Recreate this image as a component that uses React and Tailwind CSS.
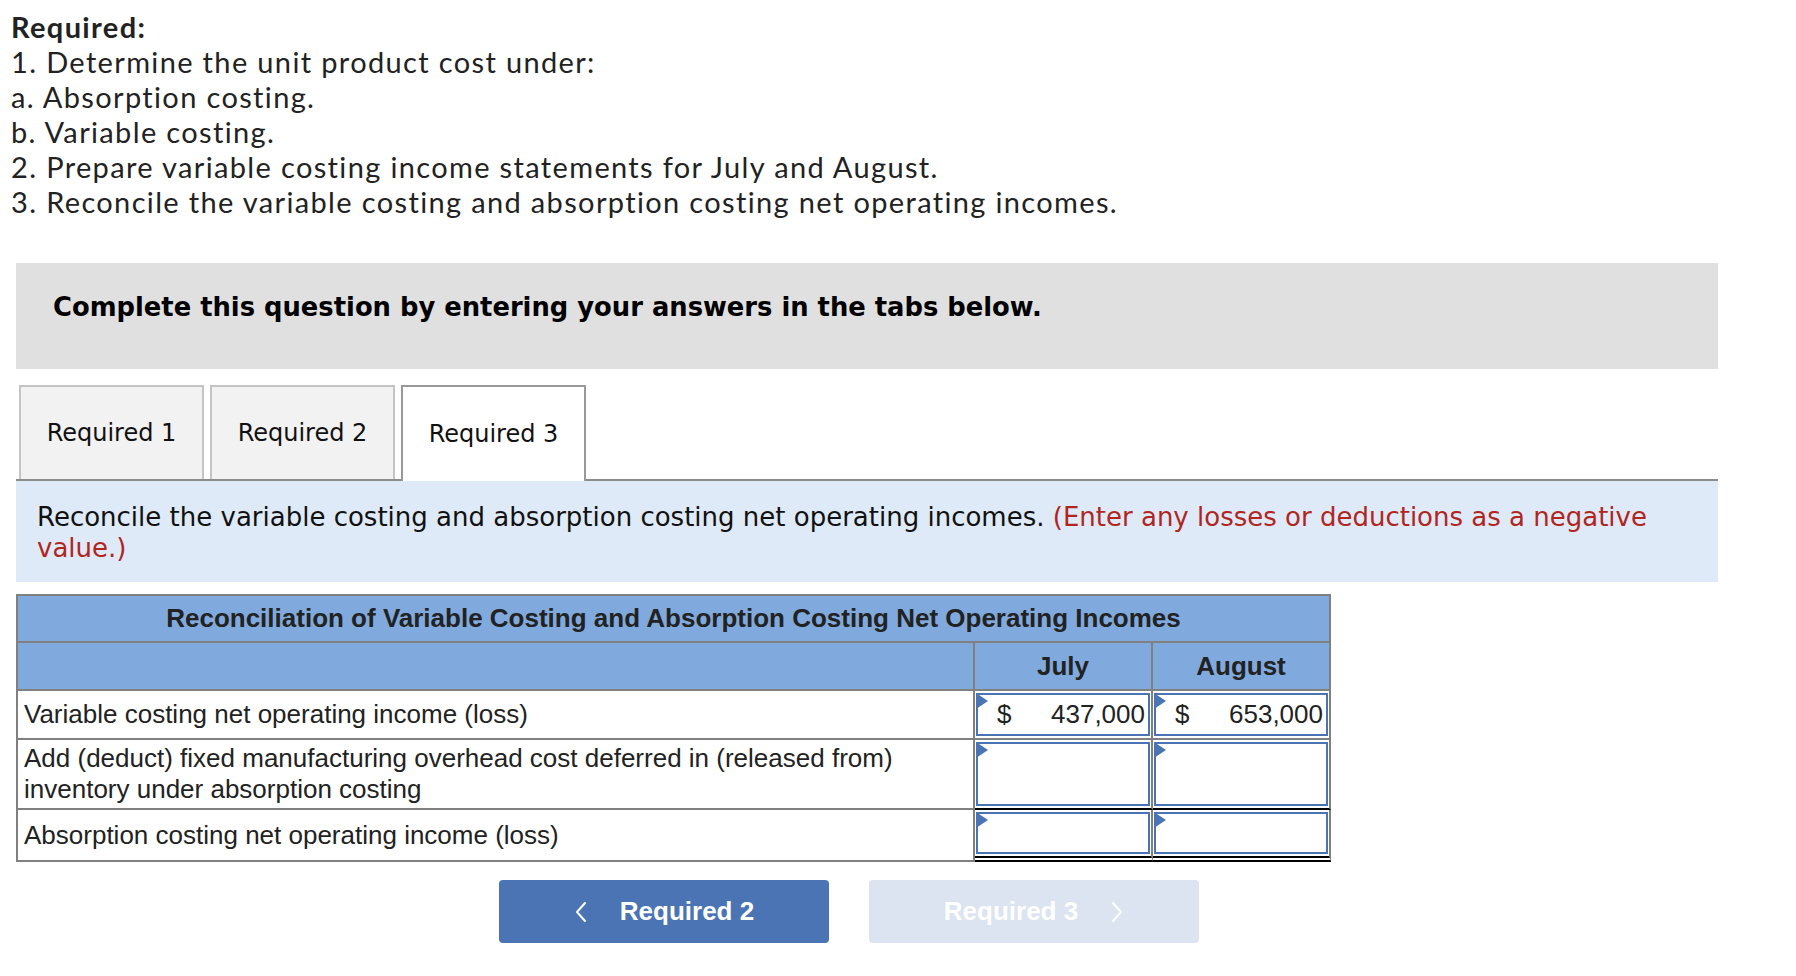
function InputCell({ value, h, last, sum }) {
  return (
    <td
      className={`w-[178px] px-[1px] py-[2px] border-r-2 border-[#808080] align-top ${
        last ? "border-b-[6px] border-double border-b-black" : sum ? "border-b-2 border-b-black" : "border-b-2"
      }`}
    >
      <div className={`relative ${h} border-2 border-[#4a74b4] flex items-center justify-between pl-[19px] pr-[3px]`}>
        <span className="absolute -top-[2px] -left-[2px] w-0 h-0 border-l-[12px] border-l-[#4a74b4] border-y-[8px] border-y-transparent" />
        {value ? (
          <>
            <span>$</span>
            <span>{value}</span>
          </>
        ) : null}
      </div>
    </td>
  );
}

function Chevron({ dir }) {
  return (
    <svg width="14" height="22" viewBox="0 0 14 22" fill="none" stroke="currentColor" strokeWidth="2" strokeLinecap="round" strokeLinejoin="round">
      {dir === "left" ? <polyline points="11,2 3,11 11,20" /> : <polyline points="3,2 11,11 3,20" />}
    </svg>
  );
}

export default function App() {
  const tabs = ["Required 1", "Required 2", "Required 3"];
  const active = 2;

  return (
    <div className="w-[1796px] min-h-[976px] bg-white pb-10">
      {/* REQUIRED LIST */}
      <div className="pl-[11px] pt-[9px] font-['Lato',sans-serif] text-[29px] leading-[35px] tracking-[1.35px] text-[#222]">
        <div className="font-bold">Required:</div>
        <div>1. Determine the unit product cost under:</div>
        <div>a. Absorption costing.</div>
        <div>b. Variable costing.</div>
        <div>2. Prepare variable costing income statements for July and August.</div>
        <div>3. Reconcile the variable costing and absorption costing net operating incomes.</div>
      </div>

      {/* INSTRUCTION BANNER */}
      <div className="mt-[44px] ml-[16px] w-[1702px] h-[106px] bg-[#e0e0e0] pl-[37px] pt-[29px] font-['DejaVu_Sans',sans-serif] font-bold text-[25.8px] leading-[30px] text-black">
        Complete this question by entering your answers in the tabs below.
      </div>

      {/* TABS */}
      <div className="mt-[16px] ml-[16px] w-[1702px] flex gap-[6px] pl-[3px] border-b-2 border-[#8c8c8c] font-['DejaVu_Sans',sans-serif] text-[24px] text-[#111]">
        {tabs.map((t, i) => (
          <div
            key={t}
            className={`w-[185px] h-[94px] flex items-center justify-center border-2 border-b-0 ${
              i === active ? "bg-white border-[#999] h-[96px] -mb-[2px]" : "bg-[#f2f2f2] border-[#c4c4c4]"
            }`}
          >
            {t}
          </div>
        ))}
      </div>

      {/* QUESTION TEXT */}
      <div className="ml-[16px] w-[1702px] h-[101px] bg-[#deeaf7] pl-[21px] pr-[20px] pt-[21px] font-['DejaVu_Sans',sans-serif] text-[26px] leading-[31px] text-[#111]">
        Reconcile the variable costing and absorption costing net operating incomes.{" "}
        <span className="text-[#b0261e]">(Enter any losses or deductions as a negative value.)</span>
      </div>

      {/* TABLE */}
      <table className="mt-[12px] ml-[16px] w-[1315px] border-separate border-spacing-0 border-t-2 border-l-2 border-[#808080] font-['Liberation_Sans',Arial,sans-serif] text-[26px] text-[#222]">
        <tbody>
          <tr>
            <td colSpan={3} className="h-[47px] bg-[#80aade] border-r-2 border-b-2 border-[#808080] text-center font-bold">
              Reconciliation of Variable Costing and Absorption Costing Net Operating Incomes
            </td>
          </tr>
          <tr>
            <td className="h-[48px] bg-[#80aade] border-r-2 border-b-2 border-[#808080]" />
            <td className="w-[178px] bg-[#80aade] border-r-2 border-b-2 border-[#808080] text-center font-bold">July</td>
            <td className="w-[178px] bg-[#80aade] border-r-2 border-b-2 border-[#808080] text-center font-bold">August</td>
          </tr>
          <tr>
            <td className="h-[48px] pl-[6px] border-r-2 border-b-2 border-[#808080]">Variable costing net operating income (loss)</td>
            <InputCell value="437,000" h="h-[43px]" />
            <InputCell value="653,000" h="h-[43px]" />
          </tr>
          <tr>
            <td className="h-[70px] pl-[6px] pr-[6px] leading-[31px] border-r-2 border-b-2 border-[#808080]">
              Add (deduct) fixed manufacturing overhead cost deferred in (released from) inventory under absorption costing
            </td>
            <InputCell sum h="h-[64px]" />
            <InputCell sum h="h-[64px]" />
          </tr>
          <tr>
            <td className="h-[50px] pl-[6px] border-r-2 border-b-2 border-[#808080]">Absorption costing net operating income (loss)</td>
            <InputCell last h="h-[42px]" />
            <InputCell last h="h-[42px]" />
          </tr>
        </tbody>
      </table>

      {/* NAV BUTTONS */}
      <div className="mt-[18px] pl-[499px] flex gap-[40px] font-['Liberation_Sans',Arial,sans-serif] font-bold text-[26px] text-white">
        <button className="w-[330px] h-[63px] rounded-[4px] bg-[#4a74b4] flex items-center justify-center gap-[32px]">
          <Chevron dir="left" />
          <span>Required 2</span>
        </button>
        <button className="w-[330px] h-[63px] rounded-[4px] bg-[#dbe4f0] flex items-center justify-center gap-[32px]">
          <span>Required 3</span>
          <Chevron dir="right" />
        </button>
      </div>
    </div>
  );
}
